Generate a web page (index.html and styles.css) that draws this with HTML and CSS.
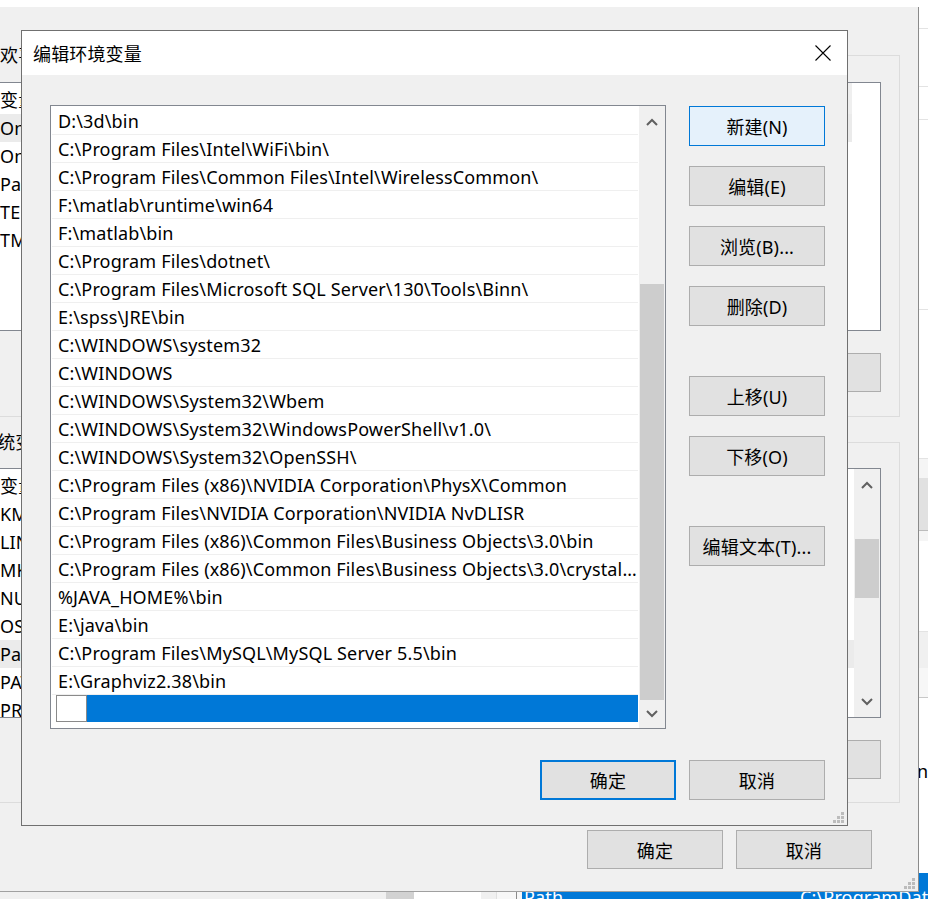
FILE: index.html
```html
<!DOCTYPE html>
<html lang="zh-CN">
<head>
    <meta charset="UTF-8">
    <title>编辑环境变量</title>
    <link rel="stylesheet" href="styles.css">
</head>
<body>
    <!-- windows further back -->
    <div class="back-row">
        <div class="br-fill"></div>
        <div class="br-thumb"></div>
        <div class="br-white"></div>
        <div class="br-light"></div>
        <div class="br-light2"></div>
        <div class="br-edge"></div>
        <div class="br-selected">
            <span class="br-name">Path</span>
            <span class="br-value">C:\ProgramData\Oracle\Java\javapath</span>
        </div>
    </div>

    <div class="side-window">
        <div class="sw-row sw-line"></div>
        <div class="sw-row sw-line"></div>
        <div class="sw-row sw-line"></div>
        <div class="sw-row sw-line"></div>
        <div class="sw-row sw-line"></div>
        <div class="sw-row sw-soft"></div>
        <div class="sw-row sw-button"></div>
        <div class="sw-row sw-soft"></div>
        <div class="sw-row sw-line"></div>
        <div class="sw-row sw-grey"></div>
        <div class="sw-row sw-edge"></div>
        <div class="sw-row sw-text">ng</div>
    </div>

    <!-- 环境变量 window -->
    <div class="env-window">
        <fieldset class="group">
            <legend class="legend-user">欢喜的用户变量(U)</legend>
            <div class="var-list">
                <div class="var-cols">
                    <div class="var-head"><span class="col-name">变量</span><span class="col-value">值</span></div>
                    <div class="var-row is-current"><span class="col-name">OneDrive</span><span class="col-value">C:\Users\欢喜\OneDrive</span></div>
                    <div class="var-row"><span class="col-name">OneDriveConsumer</span><span class="col-value">C:\Users\欢喜\OneDrive</span></div>
                    <div class="var-row"><span class="col-name">Path</span><span class="col-value">C:\Users\欢喜\AppData\Local\Microsoft\WindowsApps;</span></div>
                    <div class="var-row"><span class="col-name">TEMP</span><span class="col-value">C:\Users\欢喜\AppData\Local\Temp</span></div>
                    <div class="var-row"><span class="col-name">TMP</span><span class="col-value">C:\Users\欢喜\AppData\Local\Temp</span></div>
                </div>
            </div>
            <div class="group-buttons">
                <button class="btn btn-small">新建(N)...</button>
                <button class="btn btn-small">编辑(E)...</button>
                <button class="btn btn-small">删除(D)</button>
            </div>
        </fieldset>

        <fieldset class="group group-system">
            <legend class="legend-system">系统变量(S)</legend>
            <div class="var-list var-list-system">
                <div class="var-cols">
                    <div class="var-head"><span class="col-name">变量</span><span class="col-value">值</span></div>
                    <div class="var-row"><span class="col-name">KMP_DUPLICATE_LIB_OK</span><span class="col-value">TRUE</span></div>
                    <div class="var-row"><span class="col-name">LINGO_HOME</span><span class="col-value">C:\LINGO64</span></div>
                    <div class="var-row"><span class="col-name">MKL_SERIAL</span><span class="col-value">YES</span></div>
                    <div class="var-row"><span class="col-name">NUMBER_OF_PROCESSORS</span><span class="col-value">8</span></div>
                    <div class="var-row"><span class="col-name">OS</span><span class="col-value">Windows_NT</span></div>
                    <div class="var-row is-current"><span class="col-name">Path</span><span class="col-value">C:\ProgramData\Oracle\Java\javapath</span></div>
                    <div class="var-row"><span class="col-name">PATHEXT</span><span class="col-value">.COM;.EXE;.BAT;.CMD</span></div>
                    <div class="var-row"><span class="col-name">PROCESSOR_ARCHITECTURE</span><span class="col-value">AMD64</span></div>
                </div>
                <div class="scrollbar small-scroll">
                    <div class="sb-btn sb-up"><svg width="12" height="8" viewBox="0 0 12 8"><path d="M1 7 L6 2 L11 7" fill="none" stroke="#606060" stroke-width="2"/></svg></div>
                    <div class="sb-track"><div class="sb-thumb"></div></div>
                    <div class="sb-btn sb-down"><svg width="12" height="8" viewBox="0 0 12 8"><path d="M1 1 L6 6 L11 1" fill="none" stroke="#606060" stroke-width="2"/></svg></div>
                </div>
            </div>
            <div class="group-buttons">
                <button class="btn btn-small">新建(W)...</button>
                <button class="btn btn-small">编辑(I)...</button>
                <button class="btn btn-small">删除(L)</button>
            </div>
        </fieldset>

        <div class="env-footer">
            <button class="btn btn-small">确定</button>
            <button class="btn btn-small">取消</button>
        </div>

        <svg class="grip" width="11" height="11" viewBox="0 0 11 11" fill="#bcbcbc">
            <rect x="8" y="0" width="3" height="3"/>
            <rect x="4" y="4" width="3" height="3"/><rect x="8" y="4" width="3" height="3"/>
            <rect x="0" y="8" width="3" height="3"/><rect x="4" y="8" width="3" height="3"/><rect x="8" y="8" width="3" height="3"/>
        </svg>
    </div>

    <!-- 编辑环境变量 dialog -->
    <div class="dialog">
        <div class="dialog-title">
            <span>编辑环境变量</span>
            <svg class="close" width="16" height="16" viewBox="0 0 16 16"><path d="M0.5 0.5 L15.5 15.5 M15.5 0.5 L0.5 15.5" stroke="#000" stroke-width="1.1"/></svg>
        </div>
        <div class="dialog-body">
            <div class="dialog-main">
                <div class="path-list">
                    <div class="path-rows">
                        <div class="path-row">D:\3d\bin</div>
                        <div class="path-row">C:\Program Files\Intel\WiFi\bin\</div>
                        <div class="path-row">C:\Program Files\Common Files\Intel\WirelessCommon\</div>
                        <div class="path-row">F:\matlab\runtime\win64</div>
                        <div class="path-row">F:\matlab\bin</div>
                        <div class="path-row">C:\Program Files\dotnet\</div>
                        <div class="path-row">C:\Program Files\Microsoft SQL Server\130\Tools\Binn\</div>
                        <div class="path-row">E:\spss\JRE\bin</div>
                        <div class="path-row">C:\WINDOWS\system32</div>
                        <div class="path-row">C:\WINDOWS</div>
                        <div class="path-row">C:\WINDOWS\System32\Wbem</div>
                        <div class="path-row">C:\WINDOWS\System32\WindowsPowerShell\v1.0\</div>
                        <div class="path-row">C:\WINDOWS\System32\OpenSSH\</div>
                        <div class="path-row">C:\Program Files (x86)\NVIDIA Corporation\PhysX\Common</div>
                        <div class="path-row">C:\Program Files\NVIDIA Corporation\NVIDIA NvDLISR</div>
                        <div class="path-row">C:\Program Files (x86)\Common Files\Business Objects\3.0\bin</div>
                        <div class="path-row">C:\Program Files (x86)\Common Files\Business Objects\3.0\crystal…</div>
                        <div class="path-row">%JAVA_HOME%\bin</div>
                        <div class="path-row">E:\java\bin</div>
                        <div class="path-row">C:\Program Files\MySQL\MySQL Server 5.5\bin</div>
                        <div class="path-row">E:\Graphviz2.38\bin</div>
                        <div class="path-row is-editing">
                            <div class="edit-box"></div>
                            <div class="sel-fill"></div>
                        </div>
                    </div>
                    <div class="scrollbar">
                        <div class="sb-btn sb-up"><svg width="12" height="8" viewBox="0 0 12 8"><path d="M1 7 L6 2 L11 7" fill="none" stroke="#606060" stroke-width="2"/></svg></div>
                        <div class="sb-track"><div class="sb-thumb"></div></div>
                        <div class="sb-btn sb-down"><svg width="12" height="8" viewBox="0 0 12 8"><path d="M1 1 L6 6 L11 1" fill="none" stroke="#606060" stroke-width="2"/></svg></div>
                    </div>
                </div>

                <div class="side-buttons">
                    <button class="btn btn-default">新建(N)</button>
                    <button class="btn">编辑(E)</button>
                    <button class="btn">浏览(B)...</button>
                    <button class="btn">删除(D)</button>
                    <button class="btn spaced">上移(U)</button>
                    <button class="btn">下移(O)</button>
                    <button class="btn spaced">编辑文本(T)...</button>
                </div>
            </div>

            <div class="dialog-footer">
                <button class="btn btn-focus">确定</button>
                <button class="btn">取消</button>
            </div>
        </div>

        <svg class="grip" width="11" height="11" viewBox="0 0 11 11" fill="#bcbcbc">
            <rect x="8" y="0" width="3" height="3"/>
            <rect x="4" y="4" width="3" height="3"/><rect x="8" y="4" width="3" height="3"/>
            <rect x="0" y="8" width="3" height="3"/><rect x="4" y="8" width="3" height="3"/><rect x="8" y="8" width="3" height="3"/>
        </svg>
    </div>
</body>
</html>
```

FILE: styles.css
```css
* {
    box-sizing: border-box;
}
body {
    margin: 0;
    width: 928px;
    height: 899px;
    overflow: hidden;
    position: relative;
    background: #fff;
    font-family: "Noto Sans", "Noto Sans CJK SC", sans-serif;
    font-size: 18px;
    letter-spacing: 0.15px;
    color: #000;
}
button {
    font: inherit;
    letter-spacing: inherit;
    color: #000;
}

/* back windows */
.back-row {
    position: absolute;
    left: 0;
    right: 0;
    top: 873px;
    bottom: 0;
    display: flex;
    z-index: 0;
}
.br-fill {
    width: 386px;
    background: #f0f0f0;
}
.br-thumb {
    width: 28px;
    background: #d2d2d2;
}
.br-white {
    width: 67px;
    background: #fff;
}
.br-light {
    width: 15px;
    background: #f0f0f0;
}
.br-light2 {
    width: 20px;
    background: #f7f7f7;
    border-left: 1px solid #e0e0e0;
}
.br-edge {
    width: 6px;
    background: #f7f7f7;
    border-left: 1px solid #8a8a8a;
}
.br-selected {
    flex: 1;
    display: flex;
    background: #0078d7;
    color: #fff;
    padding-top: 10px;
    line-height: 28px;
    white-space: nowrap;
    overflow: hidden;
}
.br-name {
    flex-shrink: 0;
    width: 278px;
    padding-left: 2px;
}

.side-window {
    position: absolute;
    left: 919px;
    top: 0;
    width: 9px;
    height: 873px;
    background: #fff;
    display: grid;
    grid-template-rows: 29px 58px 33px 190px 149px 19px 53px 10px 91px 36px 30px 1fr;
    overflow: hidden;
    z-index: 1;
}
.sw-line {
    border-bottom: 1px solid #e3e3e3;
}
.sw-soft {
    background: #f5f5f5;
}
.sw-button {
    background: #e1e1e1;
    border-bottom: 1px solid #bcbcbc;
}
.sw-grey {
    background: #f0f0f0;
}
.sw-edge {
    background: #f7f7f7;
    border-bottom: 1px solid #c8c8c8;
}
.sw-text {
    padding-top: 61px;
    line-height: 24px;
    text-indent: -2px;
    white-space: nowrap;
}

/* 环境变量 window */
.env-window {
    position: absolute;
    left: -24px;
    top: 7px;
    width: 943px;
    height: 885px;
    background: #f0f0f0;
    border-right: 1px solid #8a8a8a;
    border-bottom: 1px solid #a0a0a0;
    padding: 36px 18px 0 12px;
    z-index: 2;
}
.group {
    margin: 0;
    min-width: 0;
    border: 1px solid #dcdcdc;
    padding: 15px 18px 24px 5px;
}
.group legend {
    line-height: 24px;
    padding: 0 2px;
    white-space: nowrap;
}
.legend-user {
    margin-left: 4px;
}
.legend-system {
    margin-left: -17px;
}
.group-system {
    margin-top: 13px;
    padding-top: 14px;
    padding-bottom: 23px;
}
.var-list {
    height: 249px;
    border: 1px solid #828790;
    background: #fff;
    display: flex;
    overflow: hidden;
}
.var-list-system {
    height: 250px;
}
.var-cols {
    width: 857px;
}
.var-list-system .var-cols {
    width: auto;
    flex: 1;
}
.var-head {
    display: flex;
    height: 31px;
    align-items: center;
    border-right: 4px solid #efefef;
}
.var-list-system .var-head {
    border-right: 1px solid #fff;
}
.var-row {
    display: flex;
    height: 28px;
    align-items: center;
    white-space: nowrap;
}
.var-row.is-current {
    background: #ebebeb;
}
.col-name {
    flex-shrink: 0;
    width: 240px;
    padding-left: 5px;
    overflow: hidden;
    white-space: nowrap;
}
.col-value {
    flex: 1;
    overflow: hidden;
    white-space: nowrap;
}
.group-buttons {
    display: flex;
    justify-content: flex-end;
    gap: 12px;
    margin-top: 22px;
}
.env-footer {
    display: flex;
    justify-content: flex-end;
    gap: 13px;
    margin-top: 27px;
    padding-right: 28px;
}
.grip {
    position: absolute;
    right: 3px;
    bottom: 2px;
}

/* buttons */
.btn {
    width: 136px;
    height: 40px;
    padding: 0;
    background: #e1e1e1;
    border: 1px solid #adadad;
    white-space: nowrap;
}
.btn-small {
    height: 39px;
}
.btn-default {
    background: #e5f1fb;
    border-color: #0078d7;
}
.btn-focus {
    border: 2px solid #0078d7;
}

/* scrollbars */
.scrollbar {
    width: 26px;
    background: #f0f0f0;
    display: flex;
    flex-direction: column;
}
.sb-btn {
    display: flex;
    align-items: center;
    justify-content: center;
}
.sb-up {
    height: 32px;
}
.sb-down {
    height: 28px;
}
.sb-track {
    flex: 1;
}
.sb-thumb {
    margin: 146px 1px 0;
    height: 416px;
    background: #cdcdcd;
}
.small-scroll .sb-down {
    height: 31px;
}
.small-scroll .sb-thumb {
    margin-top: 38px;
    height: 59px;
}

/* 编辑环境变量 dialog */
.dialog {
    position: absolute;
    left: 21px;
    top: 30px;
    width: 827px;
    background: #f0f0f0;
    border: 1px solid #707070;
    z-index: 3;
}
.dialog-title {
    height: 44px;
    background: #fff;
    display: flex;
    align-items: center;
    justify-content: space-between;
    padding: 0 16px 0 11px;
}
.dialog-body {
    padding: 30px 22px 25px 28px;
}
.dialog-main {
    display: flex;
    gap: 23px;
}
.path-list {
    width: 616px;
    height: 624px;
    border: 1px solid #828790;
    background: #fff;
    display: flex;
}
.path-rows {
    flex: 1;
    min-width: 0;
    padding-top: 1px;
    overflow: hidden;
}
.path-row {
    height: 28px;
    margin: 0 1px;
    padding-left: 6px;
    line-height: 29px;
    border-bottom: 1px solid #efefef;
    white-space: nowrap;
    overflow: hidden;
    text-overflow: ellipsis;
}
.path-row.is-editing {
    display: flex;
    height: 27px;
    padding-left: 4px;
    border-bottom: none;
}
.edit-box {
    width: 31px;
    background: #fff;
    border: 1px solid #8a8a8a;
}
.sel-fill {
    flex: 1;
    background: #0078d7;
}
.side-buttons {
    width: 136px;
    display: flex;
    flex-direction: column;
    gap: 20px;
    padding-top: 1px;
}
.side-buttons .spaced {
    margin-top: 30px;
}
.dialog-footer {
    display: flex;
    justify-content: flex-end;
    gap: 13px;
    margin-top: 31px;
}
```
